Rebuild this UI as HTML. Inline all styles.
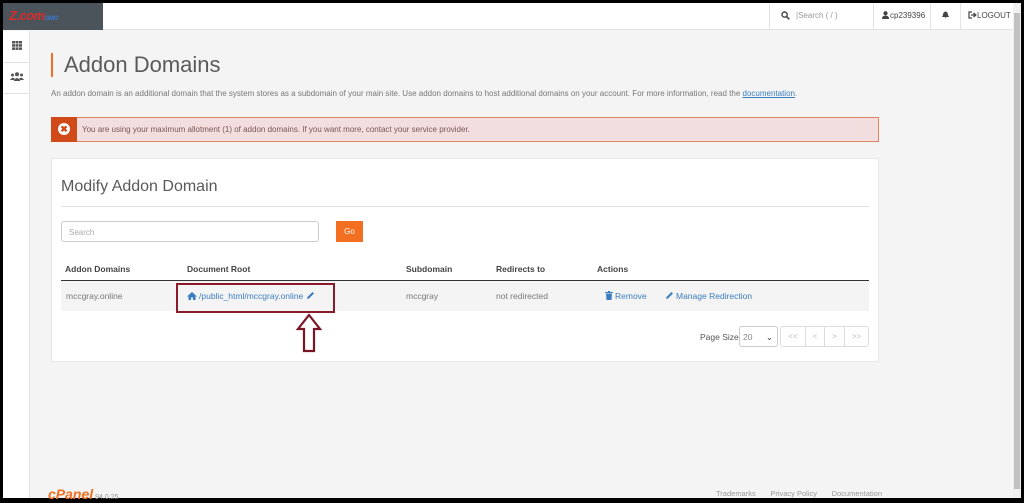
<!DOCTYPE html>
<html><head><style>
*{box-sizing:border-box;margin:0;padding:0}
body{width:1024px;height:503px;background:#000;font-family:"Liberation Sans",sans-serif;position:relative;overflow:hidden;color:#555}
.a{position:absolute}
.blue{color:#3b7ec0}
</style></head><body>
<div class="a" style="left:3px;top:3px;width:1018px;height:495px;background:#f4f4f4"></div>
<div class="a" style="left:3px;top:3px;width:1010px;height:27px;background:#fff;border-bottom:1px solid #e3e3e3"></div>
<div class="a" style="left:3px;top:3px;width:100px;height:27px;background:#4b535b"></div>
<div class="a" style="left:9px;top:8px;font:italic bold 13px 'Liberation Sans',sans-serif;color:#d92b2b;letter-spacing:-0.5px">Z.com<span style="font-size:6px;color:#3a7ad0">GMO</span></div>
<div class="a" style="left:769px;top:3px;width:1px;height:27px;background:#e3e3e3"></div>
<div class="a" style="left:873px;top:3px;width:1px;height:27px;background:#e3e3e3"></div>
<div class="a" style="left:930px;top:3px;width:1px;height:27px;background:#e3e3e3"></div>
<div class="a" style="left:960px;top:3px;width:1px;height:27px;background:#e3e3e3"></div>
<svg class="a" style="left:781px;top:11px" width="9" height="9" viewBox="0 0 9 9"><circle cx="3.6" cy="3.6" r="2.6" fill="none" stroke="#444" stroke-width="1.4"/><line x1="5.5" y1="5.5" x2="8.3" y2="8.3" stroke="#444" stroke-width="1.6"/></svg>
<div class="a" style="left:796px;top:11px;font-size:8px;color:#999">|Search ( / )</div>
<svg class="a" style="left:882px;top:11px" width="7" height="8"><circle cx="3.5" cy="2.2" r="2.1" fill="#444"/><path d="M0 8 Q0 4.5 3.5 4.5 Q7 4.5 7 8Z" fill="#444"/></svg>
<div class="a" style="left:890px;top:11px;font-size:8px;color:#444">cp239396</div>
<svg class="a" style="left:942px;top:11px" width="7" height="8"><path d="M3.5 0.5 Q6 1 6 4 L7 6 L0 6 L1 4 Q1 1 3.5 0.5Z M2.5 6.5 L4.5 6.5 Q3.5 8 2.5 6.5Z" fill="#444"/></svg>
<svg class="a" style="left:968px;top:11px" width="9" height="8"><path d="M4 1 H1 V7 H4" fill="none" stroke="#444" stroke-width="1.2"/><path d="M3 4 H7 M5.5 2 L7.8 4 L5.5 6" fill="none" stroke="#444" stroke-width="1.3"/></svg>
<div class="a" style="left:977px;top:11px;font-size:8px;color:#444">LOGOUT</div>
<div class="a" style="left:1013px;top:3px;width:8px;height:495px;background:#f0f0f0"></div>
<div class="a" style="left:1014px;top:13px;width:6px;height:476px;background:#c1c1c1"></div>
<div class="a" style="left:3px;top:31px;width:27px;height:467px;background:#fff;border-right:1px solid #e3e3e3"></div>
<div class="a" style="left:3px;top:62px;width:27px;height:1px;background:#e3e3e3"></div>
<div class="a" style="left:3px;top:93px;width:27px;height:1px;background:#e3e3e3"></div>
<svg class="a" style="left:12px;top:41px" width="10" height="9"><g fill="#555"><rect x="0" y="0" width="3" height="2.5"/><rect x="3.5" y="0" width="3" height="2.5"/><rect x="7" y="0" width="3" height="2.5"/><rect x="0" y="3.2" width="3" height="2.5"/><rect x="3.5" y="3.2" width="3" height="2.5"/><rect x="7" y="3.2" width="3" height="2.5"/><rect x="0" y="6.4" width="3" height="2.5"/><rect x="3.5" y="6.4" width="3" height="2.5"/><rect x="7" y="6.4" width="3" height="2.5"/></g></svg>
<svg class="a" style="left:10px;top:72px" width="14" height="9"><g fill="#555"><circle cx="7" cy="2.2" r="2"/><circle cx="2.5" cy="3" r="1.5"/><circle cx="11.5" cy="3" r="1.5"/><path d="M3.5 9 Q7 3 10.5 9Z"/><path d="M0 8 Q2.5 4 5 7 L4 8Z"/><path d="M14 8 Q11.5 4 9 7 L10 8Z"/></g></svg>
<div class="a" style="left:51px;top:53px;width:2px;height:24px;background:#f26f21"></div>
<div class="a" style="left:64px;top:52px;font-size:22px;color:#5a5a5a">Addon Domains</div>
<div class="a" style="left:51px;top:89px;font-size:8px;color:#777;white-space:nowrap">An addon domain is an additional domain that the system stores as a subdomain of your main site. Use addon domains to host additional domains on your account. For more information, read the <span class="blue" style="text-decoration:underline">documentation</span>.</div>
<div class="a" style="left:51px;top:117px;width:828px;height:25px;background:#f2dede;border:1px solid #e0845e"></div>
<div class="a" style="left:51px;top:117px;width:26px;height:25px;background:#d14a19"></div>
<div class="a" style="left:58px;top:123px;width:12px;height:12px;border-radius:50%;background:#fff;color:#d14a19;font-size:9px;font-weight:bold;text-align:center;line-height:12px">&#10006;</div>
<div class="a" style="left:82px;top:125px;font-size:8px;color:#7a5555">You are using your maximum allotment (1) of addon domains. If you want more, contact your service provider.</div>
<div class="a" style="left:51px;top:158px;width:828px;height:204px;background:#fff;border:1px solid #e6e6e6"></div>
<div class="a" style="left:61px;top:178px;font-size:16px;color:#5a5a5a">Modify Addon Domain</div>
<div class="a" style="left:61px;top:206px;width:808px;height:1px;background:#e3e3e3"></div>
<div class="a" style="left:61px;top:221px;width:258px;height:21px;border:1px solid #ccc;border-radius:3px;font-size:8px;color:#aaa;padding:6px 7px">Search</div>
<div class="a" style="left:336px;top:221px;width:27px;height:21px;background:#f26f21;color:#fff;font-size:8px;text-align:center;line-height:21px">Go</div>
<div class="a" style="left:65px;top:264px;font-size:8.5px;font-weight:bold;color:#444">Addon Domains</div>
<div class="a" style="left:187px;top:264px;font-size:8.5px;font-weight:bold;color:#444">Document Root</div>
<div class="a" style="left:406px;top:264px;font-size:8.5px;font-weight:bold;color:#444">Subdomain</div>
<div class="a" style="left:496px;top:264px;font-size:8.5px;font-weight:bold;color:#444">Redirects to</div>
<div class="a" style="left:597px;top:264px;font-size:8.5px;font-weight:bold;color:#444">Actions</div>
<div class="a" style="left:61px;top:280px;width:808px;height:1px;background:#333"></div>
<div class="a" style="left:61px;top:281px;width:808px;height:30px;background:#f4f4f4"></div>
<div class="a" style="left:66px;top:291px;font-size:8.5px;color:#777">mccgray.online</div>
<svg class="a" style="left:187px;top:292px" width="10" height="8"><path d="M5 0 L10 4.5 L8.5 4.5 L8.5 8 L6 8 L6 5.5 L4 5.5 L4 8 L1.5 8 L1.5 4.5 L0 4.5Z" fill="#3b7ec0"/></svg>
<div class="a blue" style="left:199px;top:291px;font-size:8.5px">/public_html/mccgray.online</div>
<svg class="a" style="left:306px;top:291px" width="9" height="9"><path d="M1 8 L1.5 6 L6.5 1 L8 2.5 L3 7.5Z" fill="#3b7ec0"/></svg>
<div class="a" style="left:406px;top:291px;font-size:8.5px;color:#777">mccgray</div>
<div class="a" style="left:496px;top:291px;font-size:8.5px;color:#777">not redirected</div>
<svg class="a" style="left:605px;top:291px" width="8" height="9"><path d="M0 1.5 H8 M3 0.5 H5" stroke="#3b7ec0" stroke-width="1"/><path d="M1 2.5 H7 L6.5 9 H1.5Z" fill="#3b7ec0"/></svg>
<div class="a blue" style="left:615px;top:291px;font-size:8.5px">Remove</div>
<svg class="a" style="left:665px;top:291px" width="9" height="9"><path d="M1 8 L1.5 6 L6.5 1 L8 2.5 L3 7.5Z" fill="#3b7ec0"/></svg>
<div class="a blue" style="left:676px;top:291px;font-size:8.5px">Manage Redirection</div>
<div class="a" style="left:176px;top:283px;width:159px;height:30px;border:2px solid #8b1a2b"></div>
<svg class="a" style="left:296px;top:313px" width="26" height="40"><path d="M13 2 L24 16 L18 16 L18 38 L8 38 L8 16 L2 16 Z" fill="#fff" stroke="#7a1526" stroke-width="2.2"/></svg>
<div class="a" style="left:700px;top:332px;font-size:8.5px;color:#555">Page Size</div>
<div class="a" style="left:739px;top:326px;width:39px;height:21px;border:1px solid #ccc;border-radius:3px;font-size:8.5px;color:#888;padding:5px 3px">20 <span style="position:absolute;right:4px;color:#333">&#8964;</span></div>
<div class="a" style="left:780px;top:326px;width:89px;height:21px;border:1px solid #ddd;border-radius:3px;display:flex;font-size:8px;color:#bbb">
<div style="width:25px;text-align:center;line-height:19px;border-right:1px solid #ddd">&lt;&lt;</div><div style="width:19px;text-align:center;line-height:19px;border-right:1px solid #ddd">&lt;</div><div style="width:20px;text-align:center;line-height:19px;border-right:1px solid #ddd">&gt;</div><div style="flex:1;text-align:center;line-height:19px">&gt;&gt;</div></div>
<div class="a" style="left:48px;top:486px;font:italic bold 14px 'Liberation Sans',sans-serif;color:#f26f21">cPanel<span style="font:normal 7px 'Liberation Sans';color:#999"> 94.0.25</span></div>
<div class="a" style="left:716px;top:489px;font-size:7.5px;color:#999;white-space:nowrap">Trademarks &nbsp;&nbsp;&nbsp;&nbsp;&nbsp; Privacy Policy &nbsp;&nbsp;&nbsp;&nbsp;&nbsp; Documentation</div>
</body></html>
